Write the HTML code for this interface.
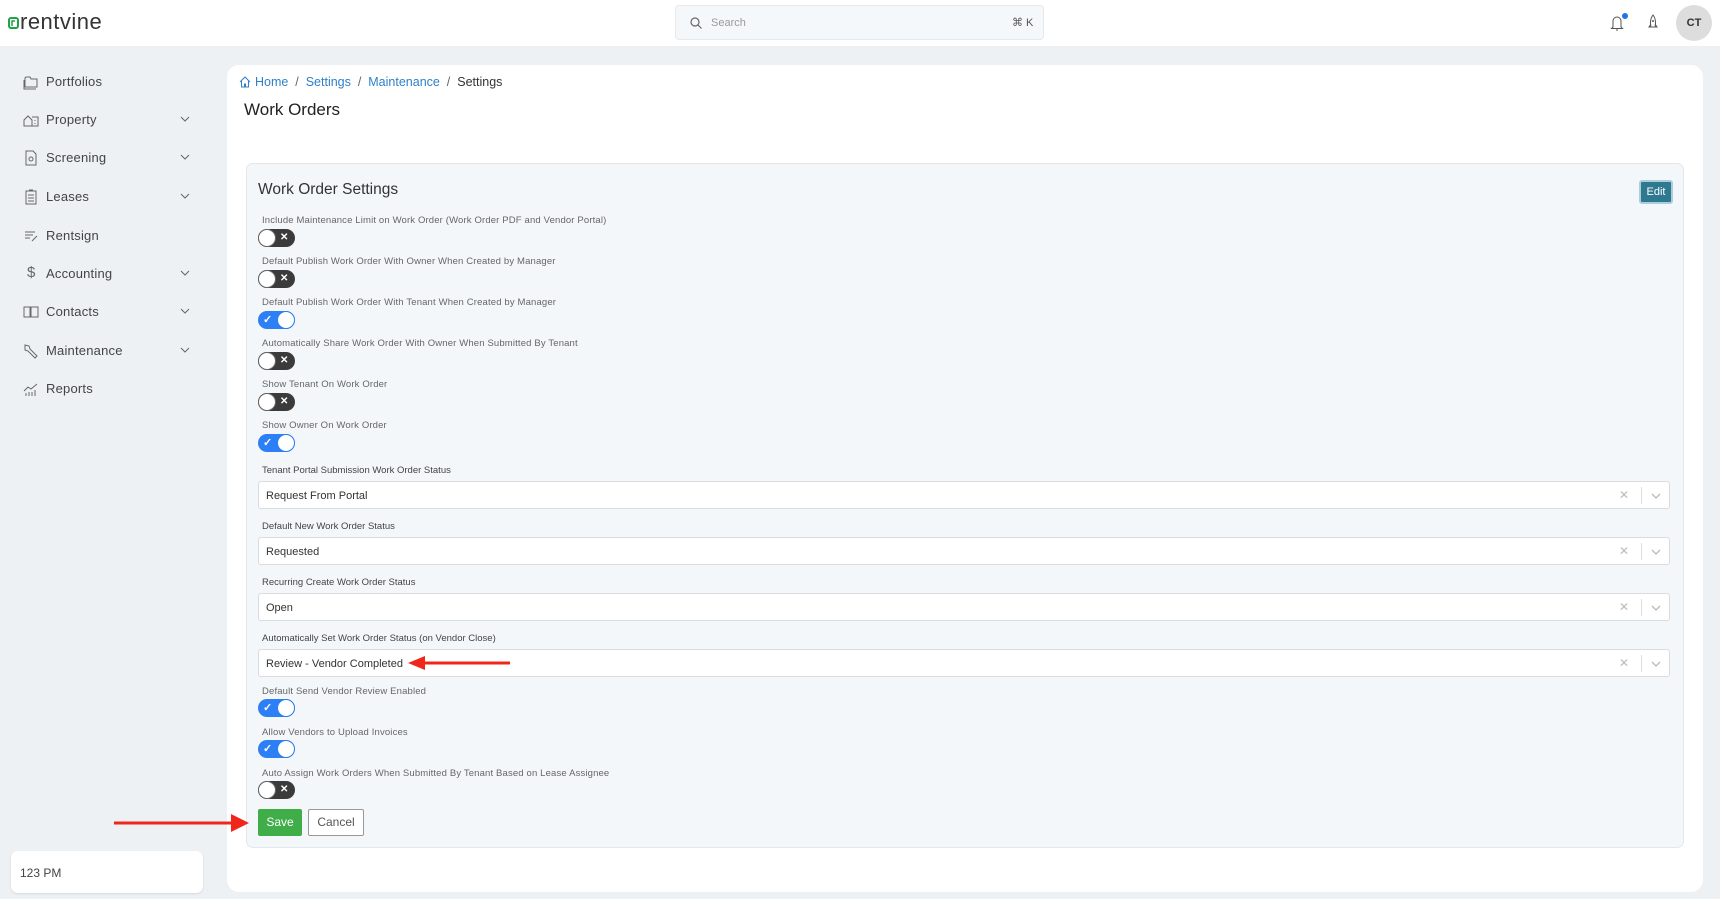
<!DOCTYPE html><html><head><style>
*{box-sizing:border-box;margin:0;padding:0}
body{width:1720px;height:899px;background:#edf1f4;font-family:"Liberation Sans",sans-serif;position:relative;overflow:hidden;color:#333}
.a{position:absolute}
.hdr{left:0;top:0;width:1720px;height:46px;background:#fff}
.nav{left:46px;font-size:13px;color:#444;letter-spacing:.2px}
.ic{left:23px;width:16px;height:16px}
.chev{left:180px;width:10px;height:10px}
.lbl{left:262px;font-size:9.5px;color:#666;letter-spacing:.15px}
.slbl{left:262px;font-size:9.5px;color:#444}
.tg{left:258px;width:37px;height:18px;border-radius:9px}
.off{background:#3b3b3b}
.off:before{content:"";position:absolute;left:0;top:0;width:18px;height:18px;border-radius:50%;background:#fff;border:1px solid #666;box-sizing:border-box}
.off:after{content:"✕";position:absolute;left:22px;top:0;font-size:10px;font-weight:bold;color:#fff;line-height:18px}
.on{background:#2d7ff5}
.on:before{content:"";position:absolute;right:0;top:0;width:18px;height:18px;border-radius:50%;background:#fff;border:1px solid #2d7ff5;box-sizing:border-box}
.on:after{content:"✓";position:absolute;left:5px;top:0;font-size:11px;font-weight:bold;color:#fff;line-height:18px}
.sel{left:258px;width:1412px;height:28px;background:#fff;border:1px solid #d9dde1;border-radius:3px;font-size:11px;color:#333;padding:8px 0 0 7px}
.sel .x{position:absolute;right:40px;top:6px;color:#bbb;font-size:12px}
.sel .d{position:absolute;right:27px;top:5px;width:1px;height:17px;background:#ddd}
.sel svg{position:absolute;right:8px;top:10px}
</style></head><body>
<div class="a hdr"></div>
<svg class="a" style="left:8px;top:17px" width="11" height="12"><rect x="1" y="1" width="9" height="10" rx="2" fill="none" stroke="#21a34a" stroke-width="2"/><path d="M4 9V4h3" stroke="#21a34a" stroke-width="1.5" fill="none"/></svg>
<div class="a" style="left:20px;top:9px;font-size:22px;color:#333;letter-spacing:.5px;line-height:26px">rentvine</div>
<div class="a" style="left:675px;top:5px;width:369px;height:35px;background:#f5f8fa;border:1px solid #e6eaed;border-radius:4px"></div>
<svg class="a" style="left:690px;top:17px" width="12" height="12"><circle cx="5" cy="5" r="4" fill="none" stroke="#666" stroke-width="1.2"/><path d="M8 8l3.5 3.5" stroke="#666" stroke-width="1.2"/></svg>
<div class="a" style="left:711px;top:17px;font-size:11px;color:#999">Search</div>
<div class="a" style="left:1012px;top:16px;font-size:11px;color:#555">⌘ K</div>
<svg class="a" style="left:1610px;top:14px" width="14" height="18"><path d="M3 13V7a4 4 0 0 1 8 0v6l1.5 1.5h-11z M6 16h2" fill="none" stroke="#555" stroke-width="1"/></svg>
<div class="a" style="left:1622px;top:13px;width:6px;height:6px;border-radius:50%;background:#1e73e8"></div>
<svg class="a" style="left:1647px;top:14px" width="12" height="16"><path d="M6 1C3 5 3 9 4 13h4c1-4 1-8-2-12zM4 10l-2 3h2M8 10l2 3H8" fill="none" stroke="#555" stroke-width="1"/><circle cx="6" cy="7" r="1" fill="#555"/></svg>
<div class="a" style="left:1676px;top:5px;width:36px;height:36px;border-radius:50%;background:#ddd;font-size:11px;font-weight:bold;color:#333;text-align:center;line-height:36px">CT</div>

<svg class="a ic" style="top:74px" viewBox="0 0 16 16"><path d="M2 4v9h12V5H8L7 3H3zM1 6v9h12" fill="none" stroke="#666"/></svg>
<div class="a nav" style="top:74px">Portfolios</div>
<svg class="a ic" style="top:112px" viewBox="0 0 16 16"><path d="M1 14V8l4-4 4 4v6zM9 5h6v9H9M12 8v1M12 11v1" fill="none" stroke="#666"/></svg>
<div class="a nav" style="top:112px">Property</div>
<svg class="a ic" style="top:150px" viewBox="0 0 16 16"><path d="M3 1h7l3 3v11H3z" fill="none" stroke="#666"/><circle cx="8" cy="9" r="2" fill="none" stroke="#666"/></svg>
<div class="a nav" style="top:150px">Screening</div>
<svg class="a ic" style="top:189px" viewBox="0 0 16 16"><path d="M3 2h10v13H3zM5 6h6M5 9h6M5 12h6M6 1h4" fill="none" stroke="#666"/></svg>
<div class="a nav" style="top:189px">Leases</div>
<svg class="a ic" style="top:228px" viewBox="0 0 16 16"><path d="M2 4h10M2 7h8M2 10h5M9 13l5-5" fill="none" stroke="#666"/></svg>
<div class="a nav" style="top:228px">Rentsign</div>
<div class="a" style="left:27px;top:264px;font-size:15px;color:#666">$</div>
<div class="a nav" style="top:266px">Accounting</div>
<svg class="a ic" style="top:304px" viewBox="0 0 16 16"><path d="M1 3h6v10H1zM8 3h7v10H8z" fill="none" stroke="#666"/></svg>
<div class="a nav" style="top:304px">Contacts</div>
<svg class="a ic" style="top:343px" viewBox="0 0 16 16"><path d="M2 2l4 1 1 3 7 7-2 2-7-7-3-1z" fill="none" stroke="#666"/></svg>
<div class="a nav" style="top:343px">Maintenance</div>
<svg class="a ic" style="top:381px" viewBox="0 0 16 16"><path d="M1 10l4-4 3 2 6-5M3 15v-3M6 15v-4M9 15v-4M12 15v-6" fill="none" stroke="#666"/></svg>
<div class="a nav" style="top:381px">Reports</div>
<svg class="a chev" style="top:114px" viewBox="0 0 10 10"><path d="M1 3l4 4 4-4" fill="none" stroke="#666"/></svg>
<svg class="a chev" style="top:152px" viewBox="0 0 10 10"><path d="M1 3l4 4 4-4" fill="none" stroke="#666"/></svg>
<svg class="a chev" style="top:191px" viewBox="0 0 10 10"><path d="M1 3l4 4 4-4" fill="none" stroke="#666"/></svg>
<svg class="a chev" style="top:268px" viewBox="0 0 10 10"><path d="M1 3l4 4 4-4" fill="none" stroke="#666"/></svg>
<svg class="a chev" style="top:306px" viewBox="0 0 10 10"><path d="M1 3l4 4 4-4" fill="none" stroke="#666"/></svg>
<svg class="a chev" style="top:345px" viewBox="0 0 10 10"><path d="M1 3l4 4 4-4" fill="none" stroke="#666"/></svg>
<div class="a" style="left:11px;top:851px;width:192px;height:42px;background:#fff;border-radius:7px;box-shadow:0 1px 2px rgba(0,0,0,.1);font-size:12px;color:#444;padding:15px 0 0 9px">123 PM</div>

<div class="a" style="left:227px;top:65px;width:1476px;height:827px;background:#fff;border-radius:12px"></div>
<svg class="a" style="left:239px;top:76px" width="12" height="12"><path d="M1 6l5-5 5 5M2.5 5v6h3V8h1v3h3V5" fill="none" stroke="#2f80c8"/></svg>
<div class="a" style="left:255px;top:75px;font-size:12.5px;color:#2f80c8">Home <span style="color:#666">&nbsp;/&nbsp;</span> Settings <span style="color:#666">&nbsp;/&nbsp;</span> Maintenance <span style="color:#666">&nbsp;/&nbsp;</span> <span style="color:#333">Settings</span></div>
<div class="a" style="left:244px;top:100px;font-size:17px;color:#222">Work Orders</div>

<div class="a" style="left:246px;top:163px;width:1438px;height:685px;background:#f4f7fa;border:1px solid #e3e7ea;border-radius:7px"></div>
<div class="a" style="left:258px;top:181px;font-size:15.5px;color:#333">Work Order Settings</div>
<div class="a" style="left:1639px;top:180px;width:34px;height:24px;background:#2e7890;border:2px solid #a9cfdc;border-radius:3px;color:#fff;font-size:11px;text-align:center;line-height:20px">Edit</div>

<div class="a lbl" style="top:215px">Include Maintenance Limit on Work Order (Work Order PDF and Vendor Portal)</div>
<div class="a tg off" style="top:229px"></div>
<div class="a lbl" style="top:256px">Default Publish Work Order With Owner When Created by Manager</div>
<div class="a tg off" style="top:270px"></div>
<div class="a lbl" style="top:297px">Default Publish Work Order With Tenant When Created by Manager</div>
<div class="a tg on" style="top:311px"></div>
<div class="a lbl" style="top:338px">Automatically Share Work Order With Owner When Submitted By Tenant</div>
<div class="a tg off" style="top:352px"></div>
<div class="a lbl" style="top:379px">Show Tenant On Work Order</div>
<div class="a tg off" style="top:393px"></div>
<div class="a lbl" style="top:420px">Show Owner On Work Order</div>
<div class="a tg on" style="top:434px"></div>

<div class="a slbl" style="top:465px">Tenant Portal Submission Work Order Status</div>
<div class="a sel" style="top:481px">Request From Portal<span class="x">✕</span><span class="d"></span><svg width="10" height="8"><path d="M1 2l4 4 4-4" fill="none" stroke="#bbb" stroke-width="1.3"/></svg></div>
<div class="a slbl" style="top:521px">Default New Work Order Status</div>
<div class="a sel" style="top:537px">Requested<span class="x">✕</span><span class="d"></span><svg width="10" height="8"><path d="M1 2l4 4 4-4" fill="none" stroke="#bbb" stroke-width="1.3"/></svg></div>
<div class="a slbl" style="top:577px">Recurring Create Work Order Status</div>
<div class="a sel" style="top:593px">Open<span class="x">✕</span><span class="d"></span><svg width="10" height="8"><path d="M1 2l4 4 4-4" fill="none" stroke="#bbb" stroke-width="1.3"/></svg></div>
<div class="a slbl" style="top:633px">Automatically Set Work Order Status (on Vendor Close)</div>
<div class="a sel" style="top:649px">Review - Vendor Completed<span class="x">✕</span><span class="d"></span><svg width="10" height="8"><path d="M1 2l4 4 4-4" fill="none" stroke="#bbb" stroke-width="1.3"/></svg></div>

<div class="a lbl" style="top:686px">Default Send Vendor Review Enabled</div>
<div class="a tg on" style="top:699px"></div>
<div class="a lbl" style="top:727px">Allow Vendors to Upload Invoices</div>
<div class="a tg on" style="top:740px"></div>
<div class="a lbl" style="top:768px">Auto Assign Work Orders When Submitted By Tenant Based on Lease Assignee</div>
<div class="a tg off" style="top:781px"></div>

<div class="a" style="left:258px;top:809px;width:44px;height:27px;background:#3fae49;border-radius:2px;color:#fff;font-size:12px;text-align:center;line-height:27px">Save</div>
<div class="a" style="left:308px;top:809px;width:56px;height:27px;background:#fff;border:1px solid #999;border-radius:2px;color:#555;font-size:12px;text-align:center;line-height:25px">Cancel</div>

<svg class="a" style="left:405px;top:653px" width="110" height="20"><path d="M15 10H105" stroke="#f0261b" stroke-width="3"/><path d="M3 10L20 3V17z" fill="#f0261b"/></svg>
<svg class="a" style="left:112px;top:812px" width="140" height="22"><path d="M2 11H125" stroke="#f0261b" stroke-width="3"/><path d="M137 11L119 2V20z" fill="#f0261b"/></svg>
</body></html>
